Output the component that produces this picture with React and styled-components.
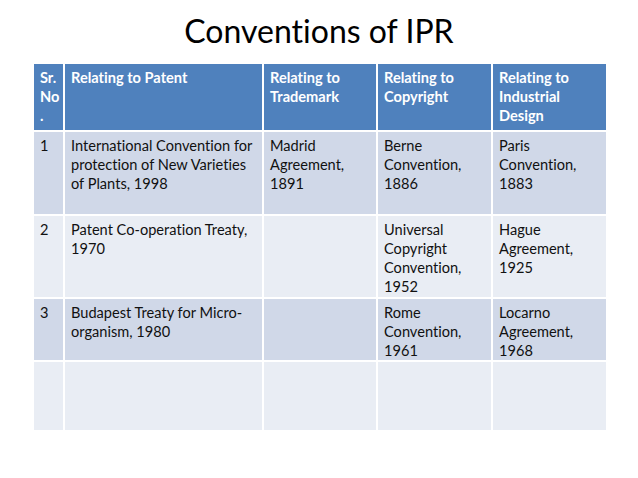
import styled, { createGlobalStyle } from "styled-components";

const Global = createGlobalStyle`
  html, body {
    margin: 0;
    padding: 0;
    background: #ffffff;
  }
  body {
    font-family: Lato, "Noto Sans", sans-serif;
    font-variant-ligatures: none;
  }
`;

const Slide = styled.div`
  width: 638px;
  height: 478px;
  box-sizing: border-box;
  padding: 11px 32px 0 32px;
  display: flex;
  flex-direction: column;
  align-items: stretch;
`;

const Title = styled.h1`
  margin: 0;
  height: 53px;
  font-family: Lato, "Noto Sans", sans-serif;
  font-weight: 400;
  font-size: 32px;
  line-height: 40px;
  text-align: center;
  color: #000000;
`;

const Table = styled.table`
  width: 574px;
  border-collapse: collapse;
  table-layout: fixed;
  font-size: 14.6px;
  line-height: 19px;
`;

const Row = styled.tr`
  height: ${(p) => p.$h}px;
  background: ${(p) => (p.$head ? "#4f81bd" : p.$odd ? "#d0d8e8" : "#e9edf4")};
`;

const Cell = styled.td`
  border: 2px solid #ffffff;
  padding: 4px 5px 0 6px;
  vertical-align: top;
  color: #111111;
  overflow: hidden;
`;

const HeadCell = styled.th`
  border: 2px solid #ffffff;
  border-top: none;
  padding: 4px 5px 0 6px;
  vertical-align: top;
  text-align: left;
  font-weight: 700;
  color: #ffffff;
`;

const widths = [31, 199, 114, 115, 115];

const head = ["Sr. No .", "Relating to Patent", "Relating to Trademark", "Relating to Copyright", "Relating to Industrial Design"];

const rows = [
  { h: 84, cells: ["1", "International Convention for protection of New Varieties of Plants, 1998", "Madrid Agreement, 1891", "Berne Convention, 1886", "Paris Convention, 1883"] },
  { h: 83, cells: ["2", "Patent Co-operation Treaty, 1970", "", "Universal Copyright Convention, 1952", "Hague Agreement, 1925"] },
  { h: 63, cells: ["3", "Budapest Treaty for Micro-organism, 1980", "", "Rome Convention, 1961", "Locarno Agreement, 1968"] },
  { h: 70, cells: ["", "", "", "", ""] },
];

export default function App() {
  return (
    <>
      <Global />
      <Slide>
        <Title>Conventions of IPR</Title>
        <Table>
          <colgroup>
            {widths.map((w, i) => (
              <col key={i} style={{ width: w }} />
            ))}
          </colgroup>
          <thead>
            <Row $head $h={67}>
              {head.map((t, i) => (
                <HeadCell key={i}>{t}</HeadCell>
              ))}
            </Row>
          </thead>
          <tbody>
            {rows.map((r, i) => (
              <Row key={i} $odd={i % 2 === 0} $h={r.h}>
                {r.cells.map((c, j) => (
                  <Cell key={j}>{c}</Cell>
                ))}
              </Row>
            ))}
          </tbody>
        </Table>
      </Slide>
    </>
  );
}
